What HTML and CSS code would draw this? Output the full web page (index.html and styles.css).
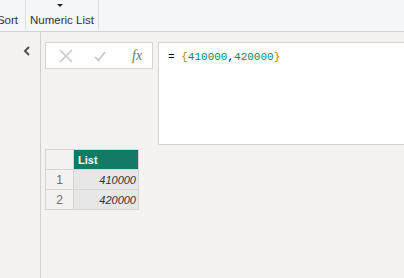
FILE: index.html
```html
<!DOCTYPE html>
<html lang="en">
<head>
    <meta charset="UTF-8">
    <title>Query Editor</title>
    <link rel="stylesheet" href="styles.css">
</head>
<body>
    <!-- Ribbon -->
    <div class="ribbon">
        <div class="group group-sort">
            <span class="group-label">Sort</span>
        </div>
        <div class="group group-list">
            <span class="drop-arrow"></span>
            <span class="group-label">Numeric List</span>
        </div>
    </div>

    <div class="main">
        <!-- Queries pane (collapsed) -->
        <div class="left-pane">
            <svg class="chevron" width="8" height="10" viewBox="0 0 8 10">
                <path d="M6 1 L2 5 L6 9" fill="none" stroke="#505050" stroke-width="2"/>
            </svg>
        </div>

        <div class="content">
            <div class="formula-row">
                <div class="formula-tools">
                    <svg class="tool" width="16" height="16" viewBox="0 0 16 16">
                        <path d="M2 2 L14 14 M14 2 L2 14" stroke="#c6c6c6" stroke-width="1.6"/>
                    </svg>
                    <svg class="tool" width="16" height="16" viewBox="0 0 16 16">
                        <path d="M3 9 L6.5 12.5 L13 4" fill="none" stroke="#c6c6c6" stroke-width="1.6"/>
                    </svg>
                    <span class="fx">fx</span>
                </div>
                <div class="formula-box"><span class="op">=</span> <span class="brace">{</span><span class="num">410000</span><span class="op">,</span><span class="num">420000</span><span class="brace">}</span></div>
            </div>

            <table class="grid">
                <thead>
                    <tr>
                        <th class="corner"></th>
                        <th class="col-head">List</th>
                    </tr>
                </thead>
                <tbody>
                    <tr>
                        <td class="row-num">1</td>
                        <td class="cell">410000</td>
                    </tr>
                    <tr>
                        <td class="row-num">2</td>
                        <td class="cell">420000</td>
                    </tr>
                </tbody>
            </table>
        </div>
    </div>
</body>
</html>
```

FILE: styles.css
```css
body {
    margin: 0;
    padding: 0;
    width: 404px;
    height: 278px;
    overflow: hidden;
    display: flex;
    flex-direction: column;
    background: #f3f2f1;
    font-family: "Liberation Sans", Arial, sans-serif;
}

.ribbon {
    height: 32px;
    flex-shrink: 0;
    display: flex;
    background: #f5f6f7;
    border-bottom: 1px solid #d2d2d2;
    box-sizing: border-box;
}

.group {
    height: 29px;
    border-right: 1px solid #dcdcdc;
    display: flex;
    flex-direction: column;
    justify-content: flex-end;
    align-items: center;
    position: relative;
}

.group-sort {
    width: 26px;
    align-items: flex-end;
    padding-right: 7px;
    box-sizing: border-box;
}

.group-list {
    width: 72px;
}

.group-label {
    font-size: 11.5px;
    color: #333;
    line-height: 13px;
    padding-bottom: 2px;
    white-space: nowrap;
}

.drop-arrow {
    position: absolute;
    top: 4px;
    left: 31px;
    width: 0;
    height: 0;
    border-left: 3px solid transparent;
    border-right: 3px solid transparent;
    border-top: 3px solid #222;
}

.main {
    flex: 1;
    display: flex;
}

.left-pane {
    width: 41px;
    flex-shrink: 0;
    border-right: 1px solid #d0d0d0;
    display: flex;
    justify-content: flex-end;
    align-items: flex-start;
    padding: 14px 9px 0 0;
    box-sizing: border-box;
}

.content {
    flex: 1;
    padding: 10px 0 0 4px;
    display: flex;
    flex-direction: column;
    align-items: flex-start;
    gap: 4px;
}

.formula-row {
    align-self: stretch;
    display: flex;
    gap: 5px;
    align-items: flex-start;
}

.formula-tools {
    width: 108px;
    height: 27px;
    box-sizing: border-box;
    background: #fff;
    border: 1px solid #d4d4d4;
    display: flex;
    align-items: center;
    gap: 18px;
    padding-left: 12px;
}

.tool {
    display: block;
}

.fx {
    font-family: "Liberation Serif", "Times New Roman", serif;
    font-style: italic;
    font-size: 14px;
    color: #6e6e6e;
    margin-left: 6px;
}

.formula-box {
    flex: 1;
    height: 103px;
    box-sizing: border-box;
    background: #fff;
    border: 1px solid #d4d4d4;
    border-right: none;
    margin-right: -2px;
    padding: 8px 0 0 9px;
    font-family: "Liberation Mono", "Courier New", monospace;
    font-size: 11px;
}

.op {
    color: #000;
}

.brace {
    color: #c87a0a;
}

.num {
    color: #098658;
}

.grid {
    border-collapse: collapse;
    font-size: 11px;
}

.grid th, .grid td {
    border: 1px solid #d4d4d4;
    height: 20px;
    padding: 0;
    box-sizing: border-box;
}

.corner {
    width: 28px;
    background: #f3f2f1;
}

.col-head {
    width: 65px;
    background: #137a66;
    color: #fff;
    text-align: left;
    padding-left: 4px !important;
    font-weight: bold;
}

.row-num {
    text-align: center;
    color: #6e6e6e;
    font-size: 12px;
}

.cell {
    background: #e6e6e6;
    font-style: italic;
    text-align: right;
    padding-right: 2px !important;
    color: #333;
}
```
